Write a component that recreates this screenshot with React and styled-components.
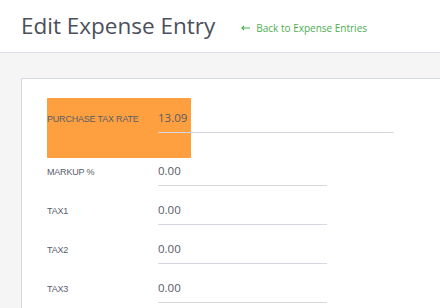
import React from "react";
import styled, { createGlobalStyle } from "styled-components";

const GlobalStyle = createGlobalStyle`
  html, body {
    margin: 0;
    padding: 0;
    background: #f5f5f5;
    font-family: "Open Sans", sans-serif;
  }
`;

const Page = styled.div`
  width: 440px;
  height: 308px;
  overflow: hidden;
  background: #f5f5f5;
`;

const Header = styled.div`
  height: 52px;
  background: #fff;
  border-bottom: 1px solid #d9dde6;
  display: flex;
  align-items: center;
  padding-left: 21px;
  gap: 26px;
`;

const Title = styled.h1`
  margin: 0;
  font-size: 22.5px;
  font-weight: 400;
  color: #4b505c;
  line-height: 1;
`;

const BackLink = styled.a`
  font-size: 10px;
  color: #4cae4f;
  text-decoration: none;
  display: flex;
  align-items: center;
  gap: 6px;
  margin-top: 3px;
`;

const Body = styled.div`
  padding: 25px 0 0 21px;
`;

const Card = styled.div`
  background: #fff;
  border: 1px solid #d6dae2;
  border-right: none;
  padding: 31px 0 0 25px;
  height: 300px;
  display: flex;
  flex-direction: column;
  gap: 16px;
`;

const Row = styled.div`
  position: relative;
  display: grid;
  grid-template-columns: 111px auto;
  justify-content: start;
  align-items: baseline;
  margin-bottom: ${p => (p.$first ? "14px" : "0")};
`;

const Highlight = styled.div`
  position: absolute;
  left: 0;
  top: -12px;
  width: 144px;
  height: 60px;
  background: #ffa040;
`;

const Label = styled.div`
  position: relative;
  font-family: "Liberation Sans", Arial, sans-serif;
  font-size: 9px;
  color: #585d69;
  letter-spacing: -0.2px;
`;

const Field = styled.div`
  position: relative;
  width: ${p => p.$width}px;
  font-size: 11.5px;
  line-height: 16px;
  color: #555a66;
  padding-bottom: 6px;
  border-bottom: 1px solid #d5d8e2;
`;

const rows = [
  { label: "PURCHASE TAX RATE", value: "13.09", width: 236, first: true },
  { label: "MARKUP %", value: "0.00", width: 169 },
  { label: "TAX1", value: "0.00", width: 169 },
  { label: "TAX2", value: "0.00", width: 169 },
  { label: "TAX3", value: "0.00", width: 169 },
];

const ArrowLeft = () => (
  <svg width="9" height="6" viewBox="0 0 9 6" fill="none" stroke="currentColor" strokeWidth="1.1">
    <path d="M9 3H1M3 1L1 3l2 2" />
  </svg>
);

export default function App() {
  return (
    <Page>
      <GlobalStyle />
      <Header>
        <Title>Edit Expense Entry</Title>
        <BackLink href="#">
          <ArrowLeft />
          <span>Back to Expense Entries</span>
        </BackLink>
      </Header>
      <Body>
        <Card>
          {rows.map(r => (
            <Row key={r.label} $first={r.first}>
              {r.first && <Highlight />}
              <Label>{r.label}</Label>
              <Field $width={r.width}>{r.value}</Field>
            </Row>
          ))}
        </Card>
      </Body>
    </Page>
  );
}
